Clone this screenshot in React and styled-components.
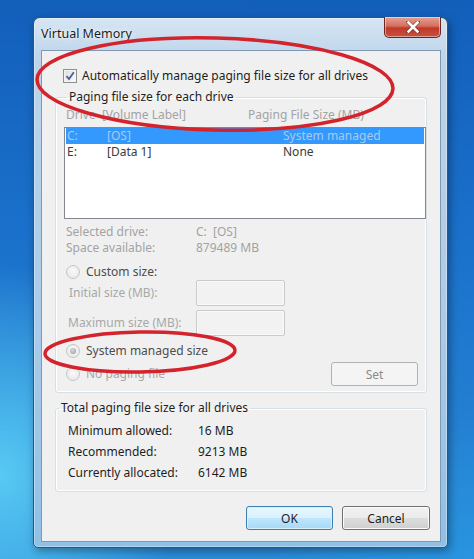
import React from "react";
import styled, { createGlobalStyle, css } from "styled-components";

const Global = createGlobalStyle`
  html, body { margin: 0; padding: 0; }
  body { width: 474px; height: 559px; overflow: hidden; font-family: "Noto Sans", "DejaVu Sans", sans-serif; }
  * { box-sizing: border-box; }
`;

const Desktop = styled.div`
  position: relative;
  width: 474px;
  height: 559px;
  overflow: hidden;
  padding: 17px 0 0 33px;
  background:
    radial-gradient(ellipse 260px 300px at 0% 85%, rgba(90, 205, 245, 0.95), rgba(90, 205, 245, 0) 70%),
    radial-gradient(ellipse 300px 200px at 100% 100%, rgba(40, 150, 225, 0.8), rgba(40, 150, 225, 0) 70%),
    linear-gradient(180deg, #125fba 0%, #1a70ca 40%, #2a8ad8 100%);
`;

const Window = styled.div`
  width: 415px;
  height: 531px;
  border-radius: 7px 7px 5px 5px;
  border: 1px solid #34557a;
  background: linear-gradient(180deg, #d6e5f3 0%, #bcd4ea 8%, #a9cae8 60%, #8fc0e6 100%);
  box-shadow: 0 0 0 1px rgba(255,255,255,0.35) inset, 2px 3px 8px rgba(0,0,0,0.35);
  display: flex;
  flex-direction: column;
  padding: 0 6px 5px 7px;
`;

const TitleBar = styled.div`
  height: 32px;
  display: flex;
  justify-content: space-between;
  align-items: flex-start;
`;

const Title = styled.div`
  padding-top: 7px;
  font-size: 12.5px;
  line-height: 18px;
  color: #1b1b1b;
  text-shadow: 0 0 6px rgba(255,255,255,0.9), 0 0 2px rgba(255,255,255,0.9);
`;

const CloseButton = styled.div`
  width: 57px;
  height: 21px;
  margin-top: -1px;
  border: 1px solid #6b2620;
  border-top: none;
  border-radius: 0 0 5px 5px;
  background: linear-gradient(180deg, #e6a193 0%, #d4705d 45%, #c0392a 55%, #c8513c 100%);
  box-shadow: 0 0 0 1px rgba(255,255,255,0.45) inset;
  display: flex;
  align-items: center;
  justify-content: center;
`;

const Client = styled.div`
  flex: 1;
  background: #f0f0f0;
  border: 1px solid #7f99b3;
  display: flex;
  flex-direction: column;
  padding: 18px 13px 8px 13px;
  color: #1e1e1e;
  font-size: 12px;
`;

const CheckRow = styled.label`
  display: flex;
  align-items: center;
  height: 14px;
  padding-left: 8px;
  gap: 5px;
  line-height: 16px;
`;

const CheckBox = styled.span`
  width: 14px;
  height: 14px;
  border: 1px solid #8e8f8f;
  background: linear-gradient(135deg, #dcdcdc, #fdfdfd);
  box-shadow: 0 0 0 1px #f4f4f4 inset;
  display: flex;
  align-items: center;
  justify-content: center;
`;

const GroupBox = styled.fieldset`
  margin: ${(p) => p.$top}px 0 0 0;
  border: 1px solid #d5dfe5;
  border-radius: 3px;
  padding: ${(p) => p.$pad};
  min-width: 0;
  box-shadow: 0 0 0 1px #fff inset;
`;

const Legend = styled.legend`
  font-size: 12px;
  line-height: 16px;
  padding: 0 2px;
  margin-left: 3px;
  color: #1e1e1e;
`;

const ColumnHeader = styled.div`
  display: grid;
  grid-template-columns: 182px 1fr;
  padding-left: 2px;
  line-height: 16px;
  color: #a3a3a3;
`;

const ListBox = styled.div`
  margin-top: 4px;
  height: 92px;
  border: 1px solid #828790;
  background: #fff;
  padding: 0 1px;
`;

const ListRow = styled.div`
  display: grid;
  grid-template-columns: 40px 176px 1fr;
  padding-left: 1px;
  height: 16px;
  line-height: 16px;
  ${(p) =>
    p.$selected
      ? css`
          background: #3399ff;
          color: #a5c9ef;
        `
      : css`
          color: #3a3a3a;
        `}
`;

const InfoGrid = styled.div`
  margin-top: 5px;
  display: grid;
  grid-template-columns: 130px 1fr;
  padding-left: 2px;
  line-height: 16px;
  color: #a3a3a3;
`;

const RadioRow = styled.div`
  display: flex;
  align-items: center;
  gap: 6px;
  padding-left: 2px;
  margin-top: ${(p) => p.$top}px;
  height: 16px;
  line-height: 16px;
  color: ${(p) => (p.$muted ? "#a8a8a8" : "#4d4d4d")};
`;

const Radio = styled.span`
  width: 14px;
  height: 14px;
  border-radius: 50%;
  border: 1px solid #c6c6c6;
  background: radial-gradient(circle at 50% 40%, #fafafa, #e4e4e4);
  display: flex;
  align-items: center;
  justify-content: center;
  flex: none;
  &::after {
    content: "";
    width: 6px;
    height: 6px;
    border-radius: 50%;
    background: ${(p) => (p.$on ? "radial-gradient(circle at 40% 35%, #d8d8d8, #9a9a9a)" : "transparent")};
  }
`;

const FieldRow = styled.div`
  display: grid;
  grid-template-columns: 132px 89px;
  align-items: center;
  margin-top: ${(p) => p.$top}px;
  height: 26px;
  color: #a8a8a8;
  line-height: 16px;
`;

const FieldLabel = styled.span`
  padding-left: ${(p) => p.$indent}px;
`;

const TextBox = styled.div`
  height: 26px;
  border: 1px solid #c9c9c9;
  border-radius: 2px;
  background: #f2f2f2;
  box-shadow: 0 0 0 1px #fafafa inset;
`;

const BottomRow = styled.div`
  margin-top: 3px;
  display: flex;
  align-items: center;
  justify-content: space-between;
  padding-right: 8px;
`;

const Button = styled.button`
  width: ${(p) => p.$w}px;
  height: 24px;
  font-family: inherit;
  font-size: 12px;
  border-radius: 3px;
  padding: 0;
  ${(p) =>
    p.$variant === "disabled"
      ? css`
          border: 1px solid #adb2b5;
          background: #f4f4f4;
          color: #8a8a8a;
        `
      : p.$variant === "default"
      ? css`
          border: 1px solid #3c7fb1;
          background: linear-gradient(180deg, #eaf6fd 0%, #d9f0fc 50%, #bee6fd 51%, #a7d9f5 100%);
          box-shadow: 0 0 0 1px #d8f2fc inset;
          color: #1e1e1e;
        `
      : css`
          border: 1px solid #707070;
          background: linear-gradient(180deg, #f2f2f2 0%, #ebebeb 50%, #dddddd 51%, #cfcfcf 100%);
          box-shadow: 0 0 0 1px #fbfbfb inset;
          color: #1e1e1e;
        `}
`;

const TotalsGrid = styled.div`
  display: grid;
  grid-template-columns: 130px 1fr;
  row-gap: 5px;
  padding-left: 12px;
  line-height: 16px;
`;

const ButtonRow = styled.div`
  margin-top: 14px;
  display: flex;
  justify-content: flex-end;
  gap: 9px;
  margin-right: -3px;
`;

const Annotations = styled.svg`
  position: absolute;
  left: 0;
  top: 0;
  width: 474px;
  height: 559px;
  pointer-events: none;
`;

export default function App() {
  return (
    <>
      <Global />
      <Desktop>
        <Window>
          <TitleBar>
            <Title>Virtual Memory</Title>
            <CloseButton>
              <svg width="14" height="12" viewBox="0 0 14 12">
                <path d="M2 1 L12 11 M12 1 L2 11" stroke="#3a0c08" strokeWidth="4" strokeLinecap="square" opacity="0.45" />
                <path d="M2.5 1.5 L11.5 10.5 M11.5 1.5 L2.5 10.5" stroke="#fff" strokeWidth="2.6" strokeLinecap="square" />
              </svg>
            </CloseButton>
          </TitleBar>
          <Client>
            <CheckRow>
              <CheckBox>
                <svg width="10" height="10" viewBox="0 0 10 10">
                  <path d="M1.5 5.2 L4 8 L8.8 1.2" fill="none" stroke="#4a5f97" strokeWidth="1.8" />
                </svg>
              </CheckBox>
              <span>Automatically manage paging file size for all drives</span>
            </CheckRow>

            <GroupBox $top={6} $pad="2px 0 6px 8px">
              <Legend>Paging file size for each drive</Legend>
              <ColumnHeader>
                <span>Drive&nbsp;&nbsp;[Volume Label]</span>
                <span>Paging File Size (MB)</span>
              </ColumnHeader>
              <ListBox>
                <ListRow $selected>
                  <span>C:</span>
                  <span>[OS]</span>
                  <span>System managed</span>
                </ListRow>
                <ListRow>
                  <span>E:</span>
                  <span>[Data 1]</span>
                  <span>None</span>
                </ListRow>
              </ListBox>
              <InfoGrid>
                <span>Selected drive:</span>
                <span>C:&nbsp;&nbsp;[OS]</span>
                <span>Space available:</span>
                <span>879489 MB</span>
              </InfoGrid>
              <RadioRow $top={8}>
                <Radio />
                <span>Custom size:</span>
              </RadioRow>
              <FieldRow $top={0}>
                <FieldLabel $indent={5}>Initial size (MB):</FieldLabel>
                <TextBox />
              </FieldRow>
              <FieldRow $top={4}>
                <FieldLabel $indent={4}>Maximum size (MB):</FieldLabel>
                <TextBox />
              </FieldRow>
              <RadioRow $top={7}>
                <Radio $on />
                <span>System managed size</span>
              </RadioRow>
              <BottomRow>
                <RadioRow $top={0} $muted>
                  <Radio />
                  <span>No paging file</span>
                </RadioRow>
                <Button $w={87} $variant="disabled">Set</Button>
              </BottomRow>
            </GroupBox>

            <GroupBox $top={7} $pad="7px 0 10px 0">
              <Legend>Total paging file size for all drives</Legend>
              <TotalsGrid>
                <span>Minimum allowed:</span>
                <span>16 MB</span>
                <span>Recommended:</span>
                <span>9213 MB</span>
                <span>Currently allocated:</span>
                <span>6142 MB</span>
              </TotalsGrid>
            </GroupBox>

            <ButtonRow>
              <Button $w={87} $variant="default">OK</Button>
              <Button $w={88}>Cancel</Button>
            </ButtonRow>
          </Client>
        </Window>
        <Annotations viewBox="0 0 474 559">
          <ellipse cx="215" cy="84" rx="178" ry="46" transform="rotate(1.5 215 84)" fill="none" stroke="#d3232c" strokeWidth="3.5" />
          <ellipse cx="140" cy="352" rx="95" ry="20" transform="rotate(-1 140 352)" fill="none" stroke="#d3232c" strokeWidth="3.5" />
        </Annotations>
      </Desktop>
    </>
  );
}
